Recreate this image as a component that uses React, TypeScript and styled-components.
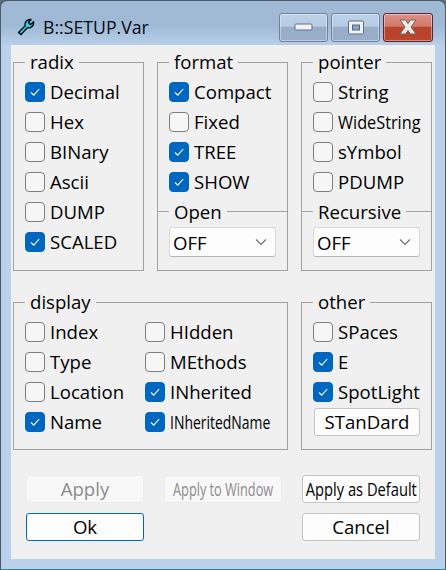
import React from "react";
import styled, { createGlobalStyle } from "styled-components";

const Global = createGlobalStyle`
  html, body { margin: 0; padding: 0; width: 446px; height: 570px; overflow: hidden; background: #5c6f80; }
  * { box-sizing: border-box; }
`;

const Win = styled.div`
  width: 446px; height: 570px;
  display: flex; flex-direction: column;
  background: linear-gradient(180deg, #9fb8d3 0, #a0b9d4 24px, #b9d1ea 46px, #b9d1ea 100%);
  border: 1px solid #4a5a68;
  border-bottom-color: #2a8a98;
  border-radius: 7px 7px 0 0;
  padding: 0 10px 10px;
  font-family: "Open Sans", "Noto Sans", sans-serif;
  color: #000;
`;

const TitleBar = styled.div`
  height: 44px; flex: none;
  display: flex; align-items: center;
  padding: 11px 0 0 6px;
  align-self: stretch;
`;

const TitleIcon = styled.svg`
  width: 18px; height: 18px; flex: none; margin-right: 8px; margin-top: -4px;
`;

const Title = styled.div`
  font-size: 17.7px; color: #0a0a14; flex: 1; margin-top: -3px;
`;

const Caps = styled.div`
  display: flex; gap: 3px; margin-top: -3px; margin-right: 2px;
`;

const Cap = styled.div<{ $close?: boolean; $w: number }>`
  width: ${p => p.$w}px; height: 29px;
  display: flex; align-items: center; justify-content: center;
  border: 1px solid ${p => (p.$close ? "#5e2230" : "#6f8198")};
  border-radius: 3px;
  box-shadow: inset 0 0 0 1px rgba(255,255,255,0.4);
  background: ${p => p.$close
    ? "linear-gradient(180deg,#dd9186 0,#d0796a 45%,#b8432a 50%,#b8452c 100%)"
    : "linear-gradient(180deg,#bdd1e8 0,#b7cbe2 45%,#98aec8 50%,#98aec8 100%)"};
`;

const Client = styled.div`
  flex: 1; background: #f0f0f0;
  display: flex; flex-direction: column;
  padding: 7px 3px 0 2px;
`;

const TopRow = styled.div`
  display: grid; grid-template-columns: 131px 131px 131px; column-gap: 13px;
  height: 219px;
`;

const BottomRow = styled.div`
  display: grid; grid-template-columns: 275px 131px; column-gap: 13px;
  height: 158px; margin-top: 21px;
`;

const Group = styled.fieldset`
  margin: 0; min-width: 0;
  border: 1px solid #a0a0a0;
  padding: 5px 0 0 0;
  display: flex; flex-direction: column;
`;

const Legend = styled.legend`
  font-size: 18.6px; line-height: 20px; padding: 0 5px; margin-left: 11px; height: 20px;
`;

const Inset = styled.div`
  padding-left: 11px; display: flex; flex-direction: column;
`;

const Row = styled.div`
  height: 30px; display: flex; align-items: center; gap: 5px; white-space: nowrap;
`;

const Box = styled.span<{ $on?: boolean }>`
  width: 20px; height: 20px; flex: none; border-radius: 4px;
  display: flex; align-items: center; justify-content: center;
  background: ${p => (p.$on ? "#0067c0" : "#f6f6f6")};
  border: 1px solid ${p => (p.$on ? "#0067c0" : "#7f7f7f")};
`;

const Label = styled.span<{ $sx?: number }>`
  font-size: 18.6px; line-height: 30px; display: inline-block;
  transform: scaleX(${p => p.$sx ?? 1}); transform-origin: left center;
`;

const Divider = styled.div`
  display: flex; align-items: center; height: 29px;
  &::before { content: ""; width: 11px; height: 1px; background: #a0a0a0; }
  &::after { content: ""; flex: 1; height: 1px; background: #a0a0a0; }
`;

const DividerText = styled.span`
  font-size: 18.6px; padding: 0 5px;
`;

const Select = styled.div`
  margin: 1px 11px 0; height: 30px; background: #fdfdfd;
  border: 1px solid #d8d8d8; border-bottom-color: #b4b4b4; border-radius: 3px;
  display: flex; align-items: center; justify-content: space-between;
  padding: 0 8px 0 3px; font-size: 18.6px;
`;

const DisplayGrid = styled.div`
  display: grid; grid-template-columns: 120px 1fr; padding-left: 11px;
`;

const Btn = styled.div<{ $off?: boolean; $primary?: boolean }>`
  height: 28px; padding-bottom: 2px;
  display: flex; align-items: center; justify-content: center; white-space: nowrap; overflow: hidden;
  font-size: 18.6px; border-radius: 3px;
  background: ${p => (p.$off ? "#f8f8f8" : "#fdfdfd")};
  color: ${p => (p.$off ? "#8c8c8c" : "#000")};
  border: 1px solid ${p => (p.$off ? "#ececec" : p.$primary ? "#0067c0" : "#c4c4c4")};
`;

const BtnText = styled.span<{ $sx?: number }>`
  display: inline-block; flex: none; transform: scaleX(${p => p.$sx ?? 1});
`;

const StandardBtn = styled(Btn)`
  margin: 1px 0 0 12px; width: 106px;
`;

const Actions = styled.div`
  display: grid; grid-template-columns: 118px 118px 118px;
  column-gap: 20px; row-gap: 10px; padding: 25px 0 0 13px; justify-content: start;
`;

const Spacer = styled.div``;

const Check = () => (
  <svg width="12" height="12" viewBox="0 0 12 12" fill="none" stroke="#fff" strokeWidth="1.1">
    <path d="M2 6.5 L4.8 9.2 L10.2 3" />
  </svg>
);

const Item = ({ label, on, sx }: { label: string; on?: boolean; sx?: number }) => (
  <Row>
    <Box $on={on}>{on && <Check />}</Box>
    <Label $sx={sx}>{label}</Label>
  </Row>
);

const Chevron = () => (
  <svg width="12" height="8" viewBox="0 0 12 8" fill="none" stroke="#6a6a6a" strokeWidth="1.1">
    <path d="M1 1.5 L6 6.5 L11 1.5" />
  </svg>
);

export default function App() {
  return (
    <Win>
      <Global />
      <TitleBar>
        <TitleIcon viewBox="0 0 18 18">
          <path d="M1.5 14.5 L8 8 C7.2 4.6 10 1 14 1.5 L11.4 4.4 L13.4 6.6 L16.6 3.8 C17.2 7.6 14 10.6 10.6 9.6 L4 16.6 Z" fill="#22dcec" stroke="#06121e" strokeWidth="1.5" strokeLinejoin="round" />
        </TitleIcon>
        <Title>B::SETUP.Var</Title>
        <Caps>
          <Cap $w={49}>
            <svg width="19" height="8" viewBox="0 0 19 8"><rect x="1" y="1" width="17" height="6" rx="1" fill="#f2f2f2" stroke="#5f7088" /></svg>
          </Cap>
          <Cap $w={49}>
            <svg width="18" height="15" viewBox="0 0 18 15"><rect x="1.5" y="1" width="15" height="13" rx="1" fill="#f2f2f2" stroke="#5f7088" /><rect x="5.5" y="5" width="7" height="5" fill="#8fa5bf" stroke="#566880" /></svg>
          </Cap>
          <Cap $close $w={50}>
            <svg width="20" height="16" viewBox="0 0 20 16"><path d="M2 1 H7.5 L10 4.5 L12.5 1 H18 L13 8 L18 15 H12.5 L10 11.5 L7.5 15 H2 L7 8 Z" fill="#efeae6" stroke="#6f6660" strokeWidth="1" strokeLinejoin="round" /></svg>
          </Cap>
        </Caps>
      </TitleBar>
      <Client>
        <TopRow>
          <Group>
            <Legend>radix</Legend>
            <Inset>
              <Item label="Decimal" on />
              <Item label="Hex" />
              <Item label="BINary" />
              <Item label="Ascii" />
              <Item label="DUMP" />
              <Item label="SCALED" on />
            </Inset>
          </Group>
          <Group>
            <Legend>format</Legend>
            <Inset>
              <Item label="Compact" on />
              <Item label="Fixed" />
              <Item label="TREE" on />
              <Item label="SHOW" on />
            </Inset>
            <Divider><DividerText>Open</DividerText></Divider>
            <Select>OFF<Chevron /></Select>
          </Group>
          <Group>
            <Legend>pointer</Legend>
            <Inset>
              <Item label="String" />
              <Item label="WideString" sx={0.875} />
              <Item label="sYmbol" />
              <Item label="PDUMP" />
            </Inset>
            <Divider><DividerText>Recursive</DividerText></Divider>
            <Select>OFF<Chevron /></Select>
          </Group>
        </TopRow>
        <BottomRow>
          <Group>
            <Legend>display</Legend>
            <DisplayGrid>
              <Item label="Index" />
              <Item label="HIdden" />
              <Item label="Type" />
              <Item label="MEthods" />
              <Item label="Location" />
              <Item label="INherited" on />
              <Item label="Name" on />
              <Item label="INheritedName" on sx={0.75} />
            </DisplayGrid>
          </Group>
          <Group>
            <Legend>other</Legend>
            <Inset>
              <Item label="SPaces" />
              <Item label="E" on />
              <Item label="SpotLight" on />
            </Inset>
            <StandardBtn>STanDard</StandardBtn>
          </Group>
        </BottomRow>
        <Actions>
          <Btn $off>Apply</Btn>
          <Btn $off><BtnText $sx={0.685}>Apply to Window</BtnText></Btn>
          <Btn><BtnText $sx={0.79}>Apply as Default</BtnText></Btn>
          <Btn $primary>Ok</Btn>
          <Spacer />
          <Btn>Cancel</Btn>
        </Actions>
      </Client>
    </Win>
  );
}
